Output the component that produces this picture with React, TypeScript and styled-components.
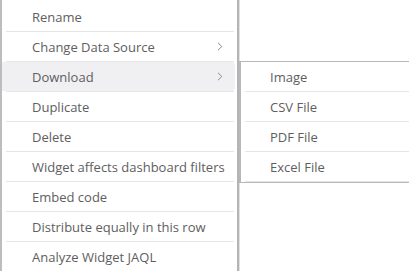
import React from "react";
import styled, { createGlobalStyle } from "styled-components";

const Global = createGlobalStyle`
  html, body { margin: 0; padding: 0; background: #ffffff; }
  body { font-family: "Open Sans", "Liberation Sans", sans-serif; overflow: hidden; }
`;

const Stage = styled.div`
  display: flex;
  align-items: flex-start;
  width: 409px;
  height: 271px;
  overflow: hidden;
`;

const Menu = styled.ul`
  list-style: none;
  margin: 0;
  padding: 2px 2px 0 0;
  width: 233px;
  flex: none;
  border-left: 2px solid #bdbdbd;
  border-right: 2px solid #b4b4b4;
  box-shadow: 1px 0 0 #e2e2e2;
  background: #fff;
`;

const SubMenu = styled.ul`
  list-style: none;
  margin: 61px 0 0 0;
  padding: 0 0 0 2px;
  width: 180px;
  flex: none;
  border: 1px solid #b8b8b8;
  border-left-width: 2px;
  background: #fff;
`;

const Item = styled.li<{ $active?: boolean }>`
  position: relative;
  display: flex;
  align-items: center;
  height: 29px;
  margin-bottom: 1px;
  padding-left: 30px;
  padding-right: 12px;
  font-size: 13px;
  color: #5e5e5e;
  white-space: nowrap;
  background: ${(p) => (p.$active ? "#f0f0f3" : "transparent")};
  border-radius: 0 4px 4px 0;
  &::after {
    content: "";
    position: absolute;
    left: 4px;
    right: 1px;
    bottom: -1px;
    height: 1px;
    background: #e6e6e6;
  }
`;

const SubItem = styled(Item)`
  padding-left: 27px;
  &::after {
    left: 2px;
    right: 2px;
  }
`;

const Label = styled.span`
  flex: 1;
`;

const Chevron = styled.svg`
  width: 6px;
  height: 9px;
  flex: none;
`;

const Arrow = () => (
  <Chevron viewBox="0 0 6 9">
    <path d="M1 0.8 L4.8 4.5 L1 8.2" fill="none" stroke="#8a8a8a" strokeWidth="1" />
  </Chevron>
);

const mainItems = [
  { label: "Rename" },
  { label: "Change Data Source", sub: true },
  { label: "Download", sub: true, active: true },
  { label: "Duplicate" },
  { label: "Delete" },
  { label: "Widget affects dashboard filters" },
  { label: "Embed code" },
  { label: "Distribute equally in this row" },
  { label: "Analyze Widget JAQL" },
];

const subItems = ["Image", "CSV File", "PDF File", "Excel File"];

export default function App() {
  return (
    <>
      <Global />
      <Stage>
        <Menu>
          {mainItems.map((it) => (
            <Item key={it.label} $active={it.active}>
              <Label>{it.label}</Label>
              {it.sub && <Arrow />}
            </Item>
          ))}
        </Menu>
        <SubMenu>
          {subItems.map((s) => (
            <SubItem key={s}>
              <Label>{s}</Label>
            </SubItem>
          ))}
        </SubMenu>
      </Stage>
    </>
  );
}
